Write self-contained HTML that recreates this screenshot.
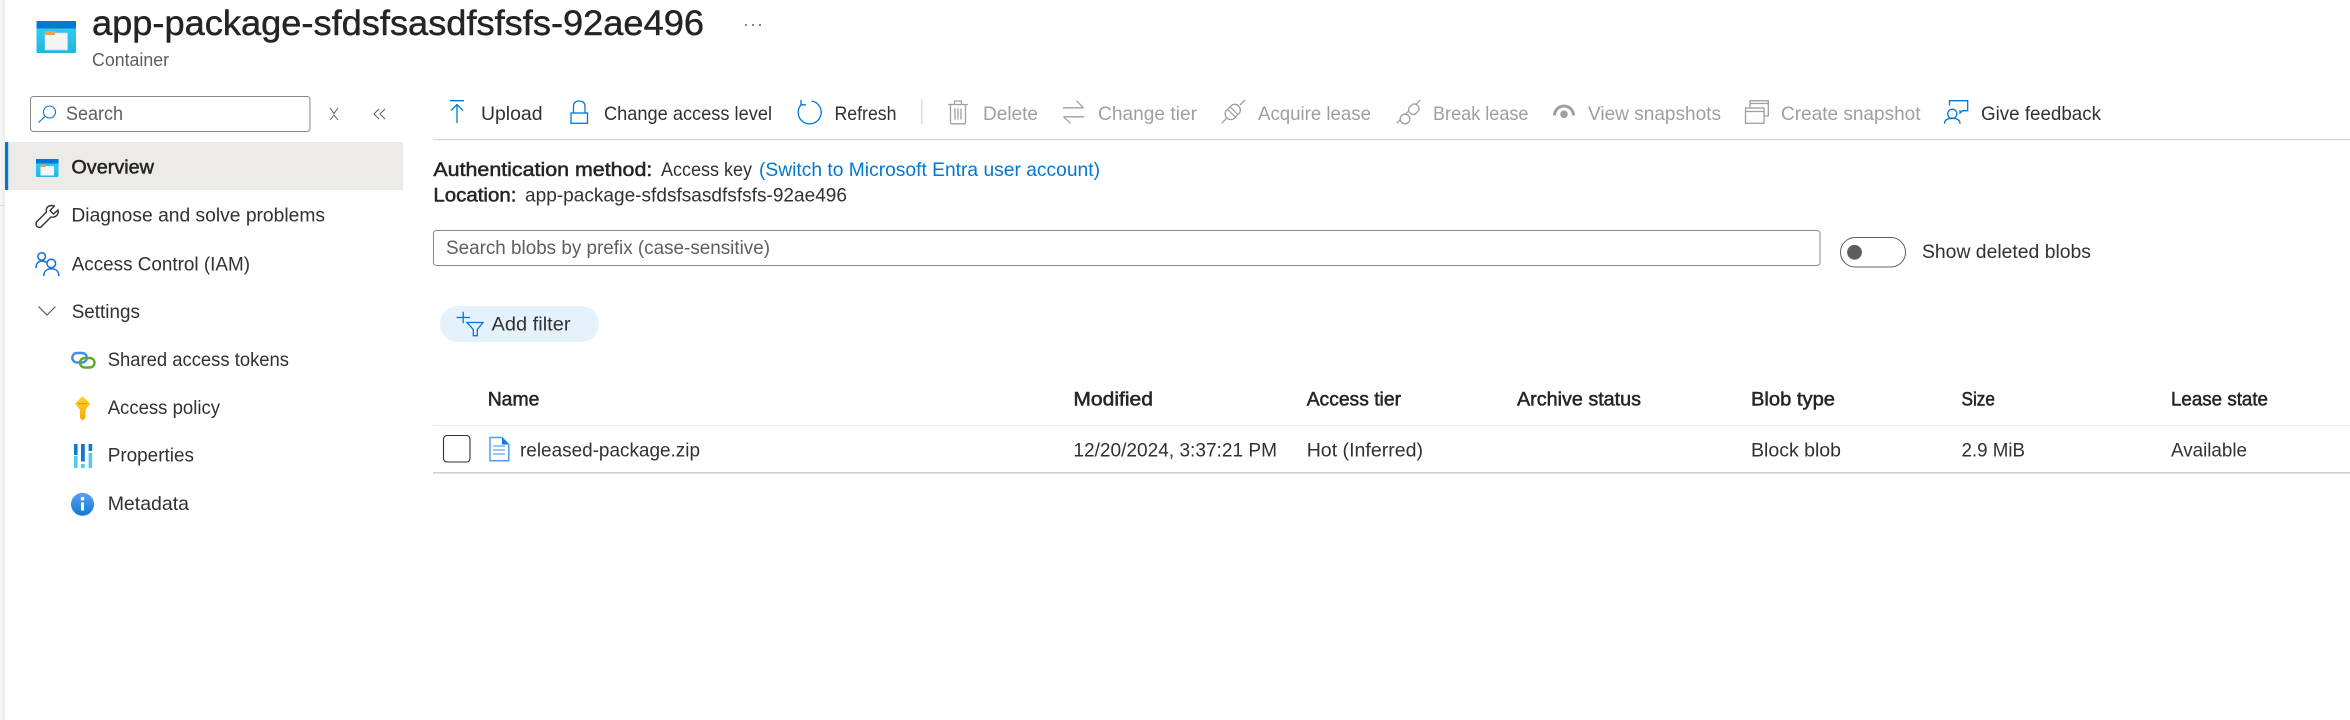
<!DOCTYPE html>
<html lang="en">
<head>
<meta charset="utf-8">
<title>app-package-sfdsfsasdfsfsfs-92ae496</title>
<style>
html,body{margin:0;padding:0;background:#fff;width:2350px;height:720px;overflow:hidden}
svg{display:block}
text{font-family:"Liberation Sans",sans-serif;font-size:19.5px;fill:#323130}
.d{fill:#a19f9d}
.b{fill:#252423;stroke:#252423;stroke-width:.5}
.l{fill:#0078d4}
.p{fill:#605e5c}
.bl{fill:none;stroke:#0078d4;stroke-width:1.3}
.gr{fill:none;stroke:#a19f9d;stroke-width:1.3}
.pp{fill:none;stroke:#0f6fdb;stroke-width:1.5}
</style>
</head>
<body>
<svg xmlns="http://www.w3.org/2000/svg" width="2350" height="720" viewBox="0 0 2350 720">
<defs>
<linearGradient id="strip" x1="0" x2="1" y1="0" y2="0"><stop offset="0" stop-color="#f8f8f8"/><stop offset="1" stop-color="#ececec"/></linearGradient>
<linearGradient id="cy" x1="0" x2="0" y1="0" y2="1"><stop offset="0" stop-color="#32d4f5"/><stop offset="1" stop-color="#25b4e0"/></linearGradient>
<linearGradient id="inf" x1="0" x2="0" y1="0" y2="1"><stop offset="0" stop-color="#5ea0ef"/><stop offset="1" stop-color="#0f78d4"/></linearGradient>
<linearGradient id="key" x1="0" x2="0" y1="0" y2="1"><stop offset="0" stop-color="#fed32a"/><stop offset="1" stop-color="#f8a70d"/></linearGradient>
</defs>

<!-- left strip -->
<rect x="0" y="0" width="5" height="720" fill="url(#strip)"/>
<rect x="0" y="205" width="5" height="1" fill="#dcdcdc"/>

<!-- header -->
<rect x="36.5" y="21" width="39.5" height="32" rx="1.5" fill="url(#cy)"/>
<rect x="36.5" y="21" width="39.5" height="7.5" fill="#0078d4"/>
<rect x="45" y="33" width="22.5" height="17" fill="#f4f4f2" stroke="#c8dde6" stroke-width=".6"/>
<rect x="45" y="31" width="10" height="4" rx="1" fill="#f7a03a"/>
<text x="92" y="35" style="font-size:35px;fill:#242424;stroke:#242424;stroke-width:.45" textLength="612" lengthAdjust="spacingAndGlyphs">app-package-sfdsfsasdfsfsfs-92ae496</text>
<text x="92" y="66" style="font-size:18px;fill:#605e5c" textLength="77" lengthAdjust="spacingAndGlyphs">Container</text>
<g fill="#605e5c"><circle cx="746" cy="25" r="1"/><circle cx="753" cy="25" r="1"/><circle cx="760" cy="25" r="1"/></g>

<!-- sidebar search -->
<rect x="30.500" y="96.500" width="279.500" height="35" rx="3" fill="#fff" stroke="#8a8886" stroke-width="1"/>
<circle cx="49.500" cy="112" r="6" class="bl" style="stroke-width:1.100"/>
<path d="M45 116.500 38.500 122.500" class="bl" style="stroke-width:1.100"/>
<text x="66" y="120" class="p" textLength="57" lengthAdjust="spacingAndGlyphs">Search</text>
<path d="M330 108 334 113.500 338 108M330 120 334 115 338 120" fill="none" stroke="#605e5c" stroke-width="1"/>
<path d="M379 109 374 114 379 119M385 109 380 114 385 119" fill="none" stroke="#605e5c" stroke-width="1"/>

<!-- sidebar items -->
<rect x="5" y="142" width="398" height="48" fill="#edebe9"/>
<rect x="5" y="142" width="3.200" height="48" fill="#0078d4"/>
<rect x="36" y="159" width="22.500" height="18" rx="1" fill="url(#cy)"/>
<rect x="36" y="159" width="22.500" height="4.500" fill="#0078d4"/>
<rect x="40.500" y="166" width="13.500" height="9.500" fill="#f7f7f5"/>
<rect x="40.500" y="164.700" width="5.500" height="2.400" rx=".6" fill="#f7a03a"/>
<text x="71.400" y="173.500" class="b" textLength="82.600" lengthAdjust="spacingAndGlyphs">Overview</text>

<path d="M37 221.500 46.500 212C45.500 208 48 205.500 52 205.500L54.500 206 50 210.500 53.500 214 58 210C59 214 56 218 51 217L41 227C39.500 228 36 227 36 224 36 223 36.300 222 37 221.500Z" fill="none" stroke="#323130" stroke-width="1.400" stroke-linejoin="round"/>
<text x="71.400" y="221.700" textLength="253.600" lengthAdjust="spacingAndGlyphs">Diagnose and solve problems</text>

<circle cx="41.700" cy="256.500" r="3.800" class="pp"/>
<path d="M36 268C36 263 39 261 42 261 44 261 45.500 261.500 46.500 262.500" class="pp"/>
<circle cx="51.300" cy="263.500" r="4.300" class="pp"/>
<path d="M43.800 276C43.800 271 47 268.800 51.300 268.800 55.600 268.800 58.800 271 58.800 276" class="pp"/>
<text x="71.700" y="270.700" textLength="178.300" lengthAdjust="spacingAndGlyphs">Access Control (IAM)</text>

<path d="M38.500 306.500 47 315 55.500 306.500" fill="none" stroke="#605e5c" stroke-width="1.200"/>
<text x="71.700" y="318" textLength="68.300" lengthAdjust="spacingAndGlyphs">Settings</text>

<rect x="72.300" y="353" width="14.500" height="9.500" rx="4.700" fill="none" stroke="#3f8fe8" stroke-width="2.400"/>
<rect x="80" y="358" width="14.500" height="9.500" rx="4.700" fill="none" stroke="#5ea82b" stroke-width="2.400"/>
<text x="107.700" y="366" textLength="181.300" lengthAdjust="spacingAndGlyphs">Shared access tokens</text>

<path d="M82.500 396 90 403.500 85.500 410V418L82.500 420.500 80 418V410L75 403.500Z" fill="url(#key)"/>
<rect x="78" y="403" width="9" height="1.200" fill="#e5960e"/>
<text x="107.700" y="414" textLength="112.300" lengthAdjust="spacingAndGlyphs">Access policy</text>

<rect x="74" y="444" width="3.600" height="11" fill="#0f78d4"/>
<rect x="74" y="456" width="3.600" height="12" fill="#4fcdf0"/>
<rect x="81" y="444" width="3.800" height="17.500" fill="#0f78d4"/>
<rect x="81" y="464" width="3.800" height="4" fill="#4fcdf0"/>
<rect x="88.600" y="444" width="3.600" height="7" fill="#0f78d4"/>
<rect x="88.600" y="453" width="3.600" height="15" fill="#4fcdf0"/>
<text x="107.700" y="461.700" textLength="86.300" lengthAdjust="spacingAndGlyphs">Properties</text>

<circle cx="82.500" cy="504.200" r="11.500" fill="url(#inf)"/>
<rect x="81" y="502.500" width="3" height="8" fill="#fff"/>
<circle cx="82.500" cy="498.700" r="1.800" fill="#fff"/>
<text x="107.700" y="510" textLength="81.300" lengthAdjust="spacingAndGlyphs">Metadata</text>

<!-- toolbar -->
<path d="M450 100.700H464M457 123V104.500M451 110.500 457 104.500 463 110.500" class="bl"/>
<text x="481" y="120" textLength="61.500" lengthAdjust="spacingAndGlyphs">Upload</text>

<rect x="571" y="113" width="16.500" height="10.300" class="bl"/>
<path d="M573.500 113V106.500C573.500 102.500 575.800 101 579.200 101 582.600 101 585 102.500 585 106.500V113" class="bl"/>
<text x="604" y="120" textLength="168" lengthAdjust="spacingAndGlyphs">Change access level</text>

<path d="M811.500 101A11.500 11.500 0 1 1 802 103.800" class="bl"/>
<path d="M801 100V104.800H806" class="bl"/>
<text x="834.500" y="120" textLength="62" lengthAdjust="spacingAndGlyphs">Refresh</text>

<rect x="921" y="99" width="1.500" height="25.500" fill="#dcdcdc"/>

<path d="M948 104.500H968M954.500 104.500V101H961.500V104.500M950.500 104.500V122.500C950.500 123.300 951 123.800 951.800 123.800H964.200C965 123.800 965.500 123.300 965.500 122.500V104.500M955 108.500V119.500M958 108.500V119.500M961 108.500V119.500" class="gr"/>
<text x="983" y="120" class="d" textLength="55" lengthAdjust="spacingAndGlyphs">Delete</text>

<path d="M1063 107.800H1083.500M1076.500 100.800 1083.500 107.800M1084 116.800H1063.500M1070.500 123.300 1063.500 116.800" class="gr"/>
<text x="1098" y="120" class="d" textLength="99" lengthAdjust="spacingAndGlyphs">Change tier</text>

<!-- acquire lease plug -->
<g class="gr">
<path d="M1221.700 123.300 1226.500 118.500M1240 105 1245 100"/>
<g transform="rotate(-45 1232.700 112)">
<rect x="1224.500" y="106.500" width="16.500" height="11" rx="5" fill="#fff" stroke="#a19f9d" stroke-width="1.300"/>
<path d="M1231 106.500V117.500M1234.500 106.500V117.500" stroke="#a19f9d" stroke-width="1.200" fill="none"/>
</g>
</g>
<text x="1258" y="120" class="d" textLength="113" lengthAdjust="spacingAndGlyphs">Acquire lease</text>

<!-- break lease plug -->
<g class="gr">
<path d="M1396.700 123.300 1400.500 119.500M1416.500 104 1420 100M1405 114.500 1408 111.500"/>
<circle cx="1405" cy="119" r="4.800" fill="#fff"/>
<g transform="rotate(-45 1414 109)">
<rect x="1408.500" y="104.500" width="10.500" height="9" rx="4" fill="#fff" stroke="#a19f9d" stroke-width="1.300"/>
</g>
</g>
<text x="1433" y="120" class="d" textLength="95.500" lengthAdjust="spacingAndGlyphs">Break lease</text>

<path d="M1554.500 115.500A9.500 9.500 0 0 1 1573.500 115.500" fill="none" stroke="#a19f9d" stroke-width="3"/>
<circle cx="1564" cy="114.300" r="3.800" fill="#a19f9d"/>
<text x="1588" y="120" class="d" textLength="133" lengthAdjust="spacingAndGlyphs">View snapshots</text>

<path d="M1750 108V100.800H1768.300V116H1764M1750 103.500H1768.300" class="gr"/>
<rect x="1745.500" y="108" width="18.500" height="15.300" fill="#fff" stroke="#a19f9d" stroke-width="1.300"/>
<path d="M1745.500 111.500H1764" class="gr"/>
<text x="1781" y="120" class="d" textLength="139.500" lengthAdjust="spacingAndGlyphs">Create snapshot</text>

<path d="M1949.500 105.500V100.700H1967.700V110.700H1962.700L1960 113V110" class="bl"/>
<circle cx="1952.300" cy="113.800" r="4.600" class="bl"/>
<path d="M1944.500 123.800C1944.500 120 1947.500 118.300 1952.300 118.300 1957 118.300 1960 120 1960 123.800" class="bl"/>
<text x="1981" y="120" textLength="120" lengthAdjust="spacingAndGlyphs">Give feedback</text>

<rect x="433" y="139" width="1917" height="1.200" fill="#d6d6d6"/>

<!-- info -->
<text x="433.400" y="176" class="b" textLength="218.900" lengthAdjust="spacingAndGlyphs">Authentication method:</text>
<text x="661" y="176" textLength="91" lengthAdjust="spacingAndGlyphs">Access key</text>
<text x="759" y="176" class="l" textLength="341" lengthAdjust="spacingAndGlyphs">(Switch to Microsoft Entra user account)</text>
<text x="433.400" y="201.700" class="b" textLength="83" lengthAdjust="spacingAndGlyphs">Location:</text>
<text x="525" y="201.700" textLength="322" lengthAdjust="spacingAndGlyphs">app-package-sfdsfsasdfsfsfs-92ae496</text>

<!-- blob search -->
<rect x="433.500" y="230.500" width="1386.500" height="35" rx="3" fill="#fff" stroke="#8a8886" stroke-width="1"/>
<text x="446" y="254" class="p" textLength="324" lengthAdjust="spacingAndGlyphs">Search blobs by prefix (case-sensitive)</text>

<rect x="1840.500" y="237.500" width="65" height="29.500" rx="14.700" fill="#fff" stroke="#605e5c" stroke-width="1"/>
<circle cx="1854.500" cy="252.300" r="7.400" fill="#605e5c"/>
<text x="1922" y="258" textLength="169" lengthAdjust="spacingAndGlyphs">Show deleted blobs</text>

<!-- add filter -->
<rect x="440" y="306" width="159" height="36" rx="18" fill="#e5f1fb"/>
<path d="M456.500 317.500H470M463.200 311.700V323.300" class="bl"/>
<path d="M467 322.500H483L477.300 329.500V335.700H473.300V329.500Z" fill="none" stroke="#0f6fdb" stroke-width="1.300"/>
<text x="491.500" y="330.700" textLength="79" lengthAdjust="spacingAndGlyphs">Add filter</text>

<!-- table -->
<text x="487.700" y="405.500" class="b" textLength="51.700" lengthAdjust="spacingAndGlyphs">Name</text>
<text x="1073.400" y="405.500" class="b" textLength="79.600" lengthAdjust="spacingAndGlyphs">Modified</text>
<text x="1306.700" y="405.500" class="b" textLength="94.300" lengthAdjust="spacingAndGlyphs">Access tier</text>
<text x="1517" y="405.500" class="b" textLength="124" lengthAdjust="spacingAndGlyphs">Archive status</text>
<text x="1751" y="405.500" class="b" textLength="84" lengthAdjust="spacingAndGlyphs">Blob type</text>
<text x="1961.500" y="405.500" class="b" textLength="33.500" lengthAdjust="spacingAndGlyphs">Size</text>
<text x="2171" y="405.500" class="b" textLength="97" lengthAdjust="spacingAndGlyphs">Lease state</text>
<rect x="433" y="425" width="1917" height="1.200" fill="#edebe9"/>

<rect x="443.500" y="435.500" width="26.500" height="26.500" rx="3.500" fill="#fff" stroke="#323130" stroke-width="1.100"/>
<path d="M490 437.500H502L508.800 444.500V460.800H490Z" fill="#fff" stroke="#4f9ded" stroke-width="1.500"/>
<path d="M502 437.500 508.800 444.500H502Z" fill="#0f78d4"/>
<path d="M493 446H505M493 450H505M493 454H505" stroke="#7ab4f0" stroke-width="1.500" fill="none"/>
<text x="520" y="456.700" textLength="180" lengthAdjust="spacingAndGlyphs">released-package.zip</text>
<text x="1073.400" y="456.700" textLength="203.600" lengthAdjust="spacingAndGlyphs">12/20/2024, 3:37:21 PM</text>
<text x="1306.700" y="456.700" textLength="116.300" lengthAdjust="spacingAndGlyphs">Hot (Inferred)</text>
<text x="1751" y="456.700" textLength="90" lengthAdjust="spacingAndGlyphs">Block blob</text>
<text x="1961.500" y="456.700" textLength="63.500" lengthAdjust="spacingAndGlyphs">2.9 MiB</text>
<text x="2171" y="456.700" textLength="76" lengthAdjust="spacingAndGlyphs">Available</text>
<rect x="433" y="472" width="1917" height="1.500" fill="#cfcfcf"/>
</svg>
</body>
</html>
